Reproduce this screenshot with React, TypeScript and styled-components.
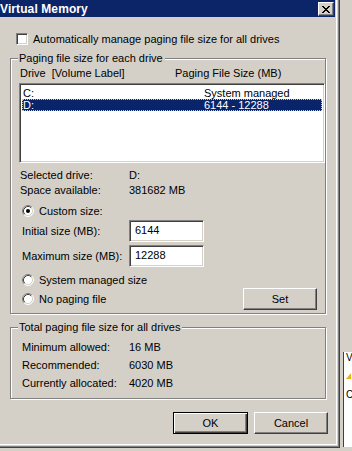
import styled, { createGlobalStyle } from "styled-components";

const GlobalStyle = createGlobalStyle`
  html, body {
    margin: 0;
    padding: 0;
    background: #d4d0c8;
    overflow: hidden;
  }
  body {
    font-family: "Liberation Sans", Arial, sans-serif;
    font-size: 11px;
    color: #000;
  }
`;

const FACE = "#d4d0c8";

const drives = [
  { drive: "C:", size: "System managed", selected: false },
  { drive: "D:", size: "6144 - 12288", selected: true },
];

const totals = [
  { label: "Minimum allowed:", value: "16 MB" },
  { label: "Recommended:", value: "6030 MB" },
  { label: "Currently allocated:", value: "4020 MB" },
];

const Radio = ({ checked }: { checked?: boolean }) => (
  <RadioIcon width="12" height="12" viewBox="0 0 12 12">
    <circle cx="6" cy="6" r="5" fill="#fff" />
    <path d="M2.11 9.89A5.5 5.5 0 0 1 9.89 2.11" stroke="#808080" fill="none" />
    <path d="M9.89 2.11A5.5 5.5 0 0 1 2.11 9.89" stroke="#fff" fill="none" />
    <path d="M2.82 9.18A4.5 4.5 0 0 1 9.18 2.82" stroke="#404040" fill="none" />
    <path d="M9.18 2.82A4.5 4.5 0 0 1 2.82 9.18" stroke={FACE} fill="none" />
    {checked && <circle cx="6" cy="6" r="2" fill="#000" />}
  </RadioIcon>
);

const App = () => {
  return (
    <>
      <GlobalStyle />
      <Page>
        <Window>
          <TitleBar>
            <Title>Virtual Memory</Title>
            <CloseButton>
              <svg width="8" height="7" viewBox="0 0 8 7">
                <path d="M0 0L7 7M1 0L8 7M7 0L0 7M8 0L1 7" stroke="#000" strokeWidth="1" />
              </svg>
            </CloseButton>
          </TitleBar>
          <Body>
            <CheckRow>
              <CheckBox />
              <span>Automatically manage paging file size for all drives</span>
            </CheckRow>

            <Group $height={256}>
              <Legend>Paging file size for each drive</Legend>
              <HeaderRow>
                <Col $width={155}>Drive&nbsp; [Volume Label]</Col>
                <span>Paging File Size (MB)</span>
              </HeaderRow>
              <ListBox>
                {drives.map((d) => (
                  <ListRow key={d.drive} $selected={d.selected}>
                    <Col $width={181}>{d.drive}</Col>
                    <span>{d.size}</span>
                  </ListRow>
                ))}
              </ListBox>
              <InfoBlock>
                <InfoRow>
                  <Col $width={109}>Selected drive:</Col>
                  <span>D:</span>
                </InfoRow>
                <InfoRow>
                  <Col $width={109}>Space available:</Col>
                  <span>381682 MB</span>
                </InfoRow>
              </InfoBlock>
              <RadioRow $top={6}>
                <Radio checked />
                <span>Custom size:</span>
              </RadioRow>
              <SizeRow>
                <Col $width={107}>Initial size (MB):</Col>
                <TextBox>6144</TextBox>
              </SizeRow>
              <SizeRow>
                <Col $width={107}>Maximum size (MB):</Col>
                <TextBox>12288</TextBox>
              </SizeRow>
              <RadioRow $top={6}>
                <Radio />
                <span>System managed size</span>
              </RadioRow>
              <LastRow>
                <RadioRow $top={0}>
                  <Radio />
                  <span>No paging file</span>
                </RadioRow>
                <Button $width={74}>Set</Button>
              </LastRow>
            </Group>

            <Group $height={72}>
              <Legend>Total paging file size for all drives</Legend>
              <TotalsList>
                {totals.map((t) => (
                  <TotalRow key={t.label}>
                    <Col $width={107}>{t.label}</Col>
                    <span>{t.value}</span>
                  </TotalRow>
                ))}
              </TotalsList>
            </Group>

            <Footer>
              <Button $width={75} $default>
                OK
              </Button>
              <Button $width={74}>Cancel</Button>
            </Footer>
          </Body>
        </Window>
        <SideStrip>
          <BehindWindow>
            <span>V</span>
            <WarnMark />
            <span>C</span>
          </BehindWindow>
        </SideStrip>
      </Page>
    </>
  );
};

export default App;

const Page = styled.div`
  display: flex;
  width: 352px;
  height: 451px;
  background: ${FACE};
`;

const Window = styled.div`
  width: 340px;
  height: 448px;
  box-sizing: border-box;
  background: ${FACE};
  border-right: 1px solid #404040;
  border-bottom: 1px solid #404040;
  box-shadow: inset -1px -1px 0 #808080, inset -2px -2px 0 ${FACE}, inset -3px -3px 0 #fff;
  display: flex;
  flex-direction: column;
  flex-shrink: 0;
`;

const TitleBar = styled.div`
  height: 17px;
  margin-right: 4px;
  background: #0b2568;
  display: flex;
  align-items: center;
  justify-content: space-between;
  padding-right: 1px;
`;

const Title = styled.span`
  color: #fff;
  font-weight: bold;
  font-size: 12px;
  margin-left: 0;
  letter-spacing: 0.1px;
`;

const CloseButton = styled.div`
  width: 14px;
  height: 12px;
  background: ${FACE};
  border: 1px solid;
  border-color: #fff #404040 #404040 #fff;
  box-shadow: inset -1px -1px 0 #808080;
  display: flex;
  align-items: center;
  justify-content: center;
  margin-top: 1px;
`;

const Body = styled.div`
  padding: 15px 0 0 10px;
  display: flex;
  flex-direction: column;
`;

const CheckRow = styled.div`
  display: flex;
  align-items: center;
  gap: 5px;
  height: 13px;
  margin-left: 6px;
`;

const CheckBox = styled.div`
  width: 12px;
  height: 12px;
  box-sizing: border-box;
  background: #fff;
  border: 1px solid;
  border-color: #808080 #fff #fff #808080;
  box-shadow: inset 1px 1px 0 #404040, inset -1px -1px 0 ${FACE};
`;

const Group = styled.div<{ $height: number }>`
  position: relative;
  margin-top: 13px;
  width: 316px;
  height: ${({ $height }) => $height}px;
  box-sizing: border-box;
  border: 1px solid #808080;
  box-shadow: 1px 1px 0 #fff, inset 1px 1px 0 #fff;
  padding: 0 8px 0 8px;
  display: flex;
  flex-direction: column;
`;

const Legend = styled.span`
  position: absolute;
  top: -7px;
  left: 7px;
  padding: 0 2px 0 1px;
  background: ${FACE};
  line-height: 13px;
`;

const Col = styled.span<{ $width: number }>`
  display: inline-block;
  width: ${({ $width }) => $width}px;
  flex-shrink: 0;
`;

const HeaderRow = styled.div`
  display: flex;
  margin-top: 8px;
  height: 13px;
  line-height: 13px;
  padding-left: 1px;
`;

const ListBox = styled.div`
  margin-top: 3px;
  width: 306px;
  height: 80px;
  box-sizing: border-box;
  background: #fff;
  border: 1px solid;
  border-color: #808080 #fff #fff #808080;
  box-shadow: inset 1px 1px 0 #404040, inset -1px -1px 0 ${FACE};
  padding: 3px 2px 0 2px;
`;

const ListRow = styled.div<{ $selected: boolean }>`
  display: flex;
  height: 12px;
  line-height: 12px;
  box-sizing: border-box;
  padding-left: 1px;
  background: ${({ $selected }) => ($selected ? "#0a246a" : "transparent")};
  color: ${({ $selected }) => ($selected ? "#fff" : "#000")};
  outline: ${({ $selected }) => ($selected ? "1px dotted #c8c8c8" : "none")};
  outline-offset: -1px;
`;

const InfoBlock = styled.div`
  margin-top: 5px;
  padding-left: 1px;
`;

const InfoRow = styled.div`
  display: flex;
  line-height: 15px;
  height: 15px;
`;

const RadioRow = styled.div<{ $top: number }>`
  display: flex;
  align-items: center;
  gap: 5px;
  height: 13px;
  margin-top: ${({ $top }) => $top}px;
  padding-left: 3px;
`;

const RadioIcon = styled.svg`
  flex-shrink: 0;
`;

const SizeRow = styled.div`
  display: flex;
  align-items: center;
  height: 22px;
  margin-top: 3px;
  padding-left: 3px;
  &:first-of-type {
    margin-top: 0;
  }
`;

const TextBox = styled.div`
  width: 75px;
  height: 22px;
  box-sizing: border-box;
  background: #fff;
  border: 1px solid;
  border-color: #808080 #fff #fff #808080;
  box-shadow: inset 1px 1px 0 #404040, inset -1px -1px 0 ${FACE};
  padding: 3px 0 0 5px;
  line-height: 13px;
`;

const LastRow = styled.div`
  display: flex;
  align-items: center;
  justify-content: space-between;
  margin-top: 2px;
`;

const Button = styled.div<{ $width: number; $default?: boolean }>`
  width: ${({ $width }) => $width}px;
  height: 22px;
  box-sizing: border-box;
  display: flex;
  align-items: center;
  justify-content: center;
  background: ${FACE};
  border: 1px solid;
  border-color: ${({ $default }) => ($default ? "#000" : "#fff #404040 #404040 #fff")};
  box-shadow: ${({ $default }) =>
    $default
      ? "inset 1px 1px 0 #fff, inset -1px -1px 0 #404040, inset -2px -2px 0 #808080"
      : "inset -1px -1px 0 #808080"};
`;

const TotalsList = styled.div`
  margin-top: 10px;
  padding-left: 3px;
`;

const TotalRow = styled.div`
  display: flex;
  height: 18px;
  line-height: 18px;
`;

const Footer = styled.div`
  display: flex;
  gap: 6px;
  margin-top: 13px;
  margin-left: 163px;
`;

const SideStrip = styled.div`
  flex: 1;
  display: flex;
  flex-direction: column;
  padding-left: 3px;
  box-sizing: border-box;
`;

const BehindWindow = styled.div`
  margin-top: 352px;
  height: 95px;
  border-left: 1px solid #404040;
  background: #fff;
  display: flex;
  flex-direction: column;
  gap: 10px;
  padding-left: 2px;
  font-size: 10px;
  overflow: hidden;
`;

const WarnMark = styled.div`
  width: 5px;
  height: 6px;
  background: #e3b327;
  clip-path: polygon(100% 0, 100% 100%, 0 100%);
`;
